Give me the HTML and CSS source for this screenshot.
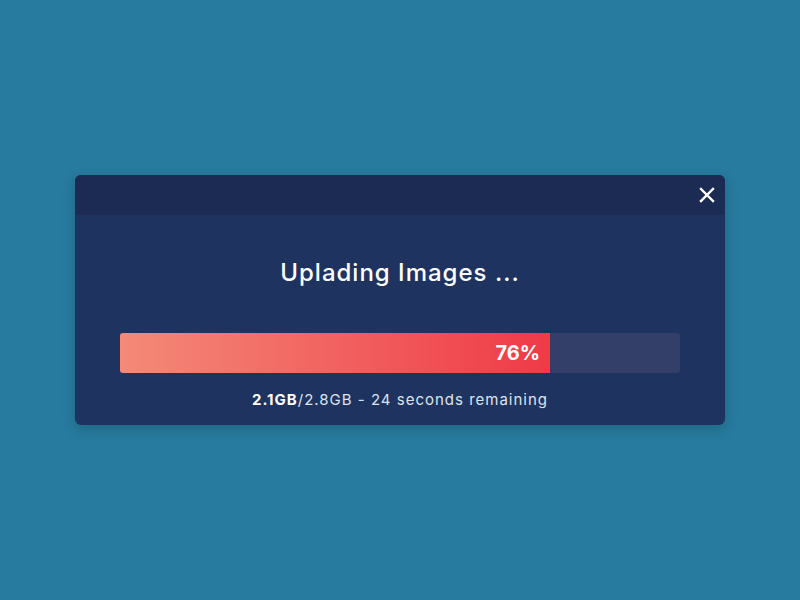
FILE: index.html
```html
<!DOCTYPE html>
<html lang="en">
<head>
    <meta charset="UTF-8">
    <meta name="viewport" content="width=device-width, initial-scale=1.0">
    <title>upload</title>
    <link rel="stylesheet" href="styles.css">
</head>
<body>

    <div class="dialog">
        <div class="dialog-head">
            <button class="close" aria-label="close">
                <svg width="16" height="16" viewBox="0 0 16 16">
                    <path d="M2 2 L14 14 M14 2 L2 14" stroke="#fff" stroke-width="2.4" stroke-linecap="square"/>
                </svg>
            </button>
        </div>
        <div class="dialog-body">
            <h1 class="title">Uplading Images ...</h1>
            <div class="track">
                <div class="fill" style="width: 76.8%">76%</div>
            </div>
            <p class="info"><b>2.1GB</b>/2.8GB - 24 seconds remaining</p>
        </div>
    </div>

</body>
</html>
```

FILE: styles.css
```css
body {
    font-family: Inter, "Open Sans", "Liberation Sans", sans-serif;
    display: flex;
    justify-content: center;
    align-items: center;
    height: 100vh;
    margin: 0;
    background-color: #277b9f;
}
.dialog {
    width: 650px;
    height: 250px;
    border-radius: 6px;
    overflow: hidden;
    background-color: #1e335f;
    box-shadow: 0 4px 14px rgba(0, 0, 0, 0.18);
}
.dialog-head {
    height: 40px;
    background-color: #1b2b54;
    display: flex;
    justify-content: flex-end;
    align-items: center;
    padding-right: 9px;
}
.close {
    background: none;
    border: 0;
    padding: 0;
    width: 18px;
    height: 18px;
    display: flex;
    align-items: center;
    justify-content: center;
}
.dialog-body {
    padding: 0 45px;
    display: flex;
    flex-direction: column;
    align-items: center;
}
.title {
    color: #fff;
    font-size: 24px;
    font-weight: 500;
    letter-spacing: 1px;
    margin: 43px 0 0;
    line-height: 30px;
}
.track {
    width: 560px;
    height: 40px;
    margin-top: 45px;
    border-radius: 3px;
    background-color: #343f69;
    overflow: hidden;
}
.fill {
    height: 100%;
    background: linear-gradient(to right, #f48a78, #ef3a47);
    color: #fff;
    font-weight: 700;
    font-size: 20px;
    display: flex;
    align-items: center;
    justify-content: flex-end;
    padding-right: 10px;
    box-sizing: border-box;
}
.info {
    color: #dfe3ee;
    font-size: 15px;
    letter-spacing: 1px;
    margin: 17px 0 0;
}
.info b {
    color: #fff;
}
```
